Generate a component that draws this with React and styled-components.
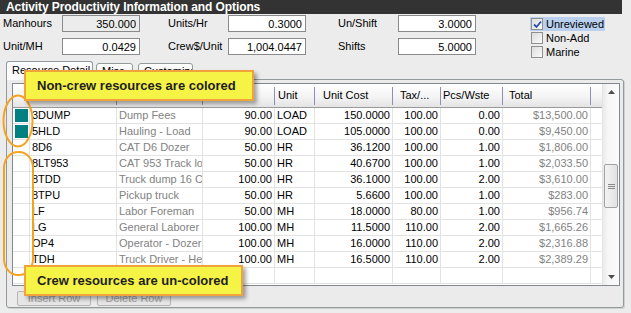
import React from 'react';
import styled, { createGlobalStyle } from 'styled-components';

const GlobalStyle = createGlobalStyle`
  html, body {
    margin: 0;
    padding: 0;
    background: #ececec;
    font-family: "Liberation Sans", Arial, sans-serif;
    font-size: 11px;
    color: #000;
  }
`;

const Window = styled.div`
  position: relative;
  width: 631px;
  height: 313px;
  overflow: hidden;
  display: flex;
  flex-direction: column;
  background: #ececec;
`;

const TitleBar = styled.div`
  width: 616px;
  height: 14px;
  padding-left: 6px;
  background: #333333;
  color: #fff;
  font-weight: bold;
  font-size: 12px;
  line-height: 14px;
  letter-spacing: -0.1px;
  white-space: nowrap;
`;

const FormArea = styled.div`
  display: flex;
  height: 46px;
  padding-top: 1px;
`;

const Fields = styled.div`
  display: grid;
  grid-template-columns: 59px 78px 88px 78px 92px 78px;
  grid-auto-rows: 17px;
  row-gap: 6px;
  padding-left: 3px;
`;

const Label = styled.div`
  padding-left: ${(p) => p.$indent || 0}px;
  line-height: 17px;
  white-space: nowrap;
`;

const Input = styled.input`
  box-sizing: border-box;
  width: 78px;
  height: 17px;
  margin: 0;
  padding: 0 3px;
  border: 1px solid #8a8a8a;
  background: ${(p) => (p.$readonly ? '#ececec' : '#fff')};
  font-family: "Liberation Sans", Arial, sans-serif;
  font-size: 11px;
  text-align: right;
  color: #000;
  outline: none;
`;

const Checks = styled.div`
  display: flex;
  flex-direction: column;
  margin-left: 54px;
  margin-top: 2px;
`;

const CheckItem = styled.div`
  display: flex;
  align-items: center;
  gap: 3px;
  width: 74px;
  height: 14px;
  padding-left: 1px;
  background: ${(p) => (p.$active ? '#b9d1ef' : 'transparent')};
  white-space: nowrap;
`;

const Box = styled.span`
  box-sizing: border-box;
  width: 12px;
  height: 12px;
  border: 1px solid #8e8f8f;
  background: linear-gradient(135deg, #dcdcdc, #fafafa);
  display: flex;
  align-items: center;
  justify-content: center;
`;

const TabStrip = styled.div`
  display: flex;
  align-items: flex-end;
  height: 18px;
  padding-left: 6px;
`;

const Tab = styled.div`
  box-sizing: border-box;
  width: ${(p) => p.$w}px;
  height: ${(p) => (p.$active ? 19 : 16)}px;
  margin-right: ${(p) => p.$gap || 0}px;
  margin-bottom: ${(p) => (p.$active ? -1 : 0)}px;
  padding: ${(p) => (p.$active ? '2px 0 0 5px' : '1px 0 0 5px')};
  border: 1px solid #919b9c;
  border-bottom: ${(p) => (p.$active ? 'none' : '1px solid #919b9c')};
  border-radius: 3px 3px 0 0;
  background: ${(p) =>
    p.$active ? '#fcfcfe' : 'linear-gradient(#fefefe, #ececec)'};
  white-space: nowrap;
  overflow: hidden;
  position: relative;
  z-index: ${(p) => (p.$active ? 1 : 0)};
`;

const Panel = styled.div`
  box-sizing: border-box;
  width: 618px;
  height: 229px;
  margin-left: 6px;
  padding: 3px 3px 0 5px;
  border: 1px solid #919b9c;
  border-radius: 0 3px 3px 3px;
  background: #ebebeb;
  box-shadow: 1px 1px 0 #d0d0d0;
  display: flex;
  flex-direction: column;
`;

const GridFrame = styled.div`
  box-sizing: border-box;
  width: 608px;
  height: 203px;
  border: 1px solid #828790;
  background: #fff;
  display: flex;
`;

const GridBody = styled.div`
  flex: 1;
  display: flex;
  flex-direction: column;
  overflow: hidden;
`;

const COLS = '17px 87px 86px 72px 40px 78px 48px 62px 88px 12px';

const HeaderRow = styled.div`
  display: grid;
  grid-template-columns: ${COLS};
  height: 24px;
  box-sizing: border-box;
  border-bottom: 1px solid #9a9a9a;
  background: linear-gradient(#ffffff, #f4f4f4 55%, #e4e4e4);
`;

const HeaderCell = styled.div`
  position: relative;
  padding-left: ${(p) => p.$pad || 5}px;
  line-height: 23px;
  white-space: nowrap;
  overflow: hidden;
  &::after {
    content: '';
    position: absolute;
    right: 0;
    top: 3px;
    bottom: 2px;
    width: 1px;
    background: ${(p) => (p.$sep === false ? 'transparent' : '#8e8fb8')};
  }
`;

const Row = styled.div`
  display: grid;
  grid-template-columns: ${COLS};
  height: 16px;
`;

const Cell = styled.div`
  box-sizing: border-box;
  border-right: 1px solid #e3e3e3;
  border-bottom: 1px solid #e3e3e3;
  padding: ${(p) => (p.$right ? '0 2px 0 0' : '0 0 0 2px')};
  text-align: ${(p) => (p.$right ? 'right' : 'left')};
  color: ${(p) => (p.$muted ? '#828282' : '#000')};
  line-height: 15px;
  white-space: nowrap;
  overflow: hidden;
`;

const Swatch = styled.div`
  box-sizing: border-box;
  border-right: 1px solid #e3e3e3;
  border-bottom: 1px solid #e3e3e3;
  padding: 1px 1px 1px 2px;
  &::before {
    content: '';
    display: ${(p) => (p.$color ? 'block' : 'none')};
    height: 100%;
    background: ${(p) => p.$color || 'transparent'};
  }
`;

const Scrollbar = styled.div`
  width: 16px;
  display: flex;
  flex-direction: column;
  align-items: center;
  background: linear-gradient(90deg, #eaeaea, #f6f6f6 30%, #fbfbfb);
  border-left: 1px solid #e4e4e4;
`;

const ScrollArrow = styled.div`
  height: 16px;
  width: 16px;
  display: flex;
  align-items: center;
  justify-content: center;
`;

const Thumb = styled.div`
  box-sizing: border-box;
  width: 14px;
  height: 44px;
  margin-top: ${(p) => p.$top}px;
  border: 1px solid #a2a2a2;
  border-radius: 2px;
  background: linear-gradient(90deg, #f3f3f3, #e2e2e2);
  display: flex;
  align-items: center;
  justify-content: center;
`;

const Track = styled.div`
  flex: 1;
`;

const ButtonRow = styled.div`
  display: flex;
  gap: 6px;
  margin-top: 5px;
  padding-left: 5px;
`;

const Button = styled.div`
  box-sizing: border-box;
  width: 74px;
  height: 15px;
  border: 1px solid #b5b5b5;
  border-radius: 2px;
  background: #e6e6e6;
  color: #a0a0a0;
  text-align: center;
  line-height: 13px;
`;

const Callout = styled.div`
  position: absolute;
  left: ${(p) => p.$x}px;
  top: ${(p) => p.$y}px;
  width: ${(p) => p.$w}px;
  height: 31px;
  box-sizing: border-box;
  border: 2px solid #f2a23a;
  background: #f6f347;
  box-shadow: 3px 3px 4px rgba(0, 0, 0, 0.35);
  padding-left: 11px;
  font-size: 13px;
  font-weight: bold;
  color: #1e1e1e;
  line-height: 27px;
  white-space: nowrap;
  z-index: 5;
`;

const Marks = styled.svg`
  position: absolute;
  left: 0;
  top: 0;
  z-index: 4;
  pointer-events: none;
`;

const rows = [
  ['#008080', '3DUMP', 'Dump Fees', '90.00', 'LOAD', '150.0000', '100.00', '0.00', '$13,500.00'],
  ['#008080', '5HLD', 'Hauling - Load', '90.00', 'LOAD', '105.0000', '100.00', '0.00', '$9,450.00'],
  [null, '8D6', 'CAT D6 Dozer', '50.00', 'HR', '36.1200', '100.00', '1.00', '$1,806.00'],
  [null, '8LT953', 'CAT 953 Track loader', '50.00', 'HR', '40.6700', '100.00', '1.00', '$2,033.50'],
  [null, '8TDD', 'Truck dump 16 CY', '100.00', 'HR', '36.1000', '100.00', '2.00', '$3,610.00'],
  [null, '8TPU', 'Pickup truck', '50.00', 'HR', '5.6600', '100.00', '1.00', '$283.00'],
  [null, 'LF', 'Labor Foreman', '50.00', 'MH', '18.0000', '80.00', '1.00', '$956.74'],
  [null, 'LG', 'General Laborer', '100.00', 'MH', '11.5000', '110.00', '2.00', '$1,665.26'],
  [null, 'OP4', 'Operator - Dozer, Loader', '100.00', 'MH', '16.0000', '110.00', '2.00', '$2,316.88'],
  [null, 'TDH', 'Truck Driver - Heavy', '100.00', 'MH', '16.5000', '110.00', '2.00', '$2,389.29'],
  [null, '', '', '', '', '', '', '', ''],
];

const Check = () => (
  <svg width="9" height="9" viewBox="0 0 9 9">
    <path d="M1 4.5 L3.5 7 L8 1.5" fill="none" stroke="#2850a8" strokeWidth="1.8" />
  </svg>
);

const Arrow = ({ down }) => (
  <svg width="7" height="4" viewBox="0 0 7 4">
    <path d={down ? 'M0 0 H7 L3.5 4 Z' : 'M0 4 H7 L3.5 0 Z'} fill="#4d4d4d" />
  </svg>
);

const Grip = () => (
  <svg width="7" height="5" viewBox="0 0 7 5">
    <path d="M0 0.5 H7 M0 2.5 H7 M0 4.5 H7" stroke="#8a8a8a" strokeWidth="1" />
  </svg>
);

export default function App() {
  return (
    <Window>
      <GlobalStyle />
      <TitleBar>Activity Productivity Information and Options</TitleBar>
      <FormArea>
        <Fields>
          <Label>Manhours</Label>
          <Input $readonly readOnly value="350.000" />
          <Label $indent={28}>Units/Hr</Label>
          <Input readOnly value="0.3000" />
          <Label $indent={32}>Un/Shift</Label>
          <Input readOnly value="3.0000" />
          <Label>Unit/MH</Label>
          <Input readOnly value="0.0429" />
          <Label $indent={28}>Crew$/Unit</Label>
          <Input readOnly value="1,004.0447" />
          <Label $indent={32}>Shifts</Label>
          <Input readOnly value="5.0000" />
        </Fields>
        <Checks>
          <CheckItem $active>
            <Box><Check /></Box>Unreviewed
          </CheckItem>
          <CheckItem>
            <Box />Non-Add
          </CheckItem>
          <CheckItem>
            <Box />Marine
          </CheckItem>
        </Checks>
      </FormArea>
      <TabStrip>
        <Tab $active $w={87} $gap={3}>Resource Detail</Tab>
        <Tab $w={37} $gap={5}>Misc</Tab>
        <Tab $w={55}>Customize</Tab>
      </TabStrip>
      <Panel>
        <GridFrame>
          <GridBody>
            <HeaderRow>
              <HeaderCell $sep={false} />
              <HeaderCell />
              <HeaderCell />
              <HeaderCell />
              <HeaderCell $pad={3}>Unit</HeaderCell>
              <HeaderCell $pad={8}>Unit Cost</HeaderCell>
              <HeaderCell $pad={7}>Tax/...</HeaderCell>
              <HeaderCell $pad={2}>Pcs/Wste</HeaderCell>
              <HeaderCell $pad={6}>Total</HeaderCell>
              <HeaderCell $sep={false} />
            </HeaderRow>
            {rows.map((r, i) => (
              <Row key={i}>
                <Swatch $color={r[0]} />
                <Cell>{r[1]}</Cell>
                <Cell $muted>{r[2]}</Cell>
                <Cell $right>{r[3]}</Cell>
                <Cell>{r[4]}</Cell>
                <Cell $right>{r[5]}</Cell>
                <Cell $right>{r[6]}</Cell>
                <Cell $right>{r[7]}</Cell>
                <Cell $right $muted>{r[8]}</Cell>
                <Cell />
              </Row>
            ))}
          </GridBody>
          <Scrollbar>
            <ScrollArrow><Arrow /></ScrollArrow>
            <Thumb $top={64}><Grip /></Thumb>
            <Track />
            <ScrollArrow><Arrow down /></ScrollArrow>
          </Scrollbar>
        </GridFrame>
        <ButtonRow>
          <Button>Insert Row</Button>
          <Button>Delete Row</Button>
        </ButtonRow>
      </Panel>

      <Marks width="631" height="313">
        <ellipse cx="18" cy="121" rx="14.5" ry="25.5" fill="none" stroke="#f5a31f" strokeWidth="2" />
        <rect x="4" y="152" width="29" height="123" rx="14" ry="16" fill="none" stroke="#f5a31f" strokeWidth="2" />
      </Marks>
      <Callout $x={24} $y={70} $w={230}>Non-crew resources are colored</Callout>
      <Callout $x={24} $y={265} $w={219}>Crew resources are un-colored</Callout>
    </Window>
  );
}
